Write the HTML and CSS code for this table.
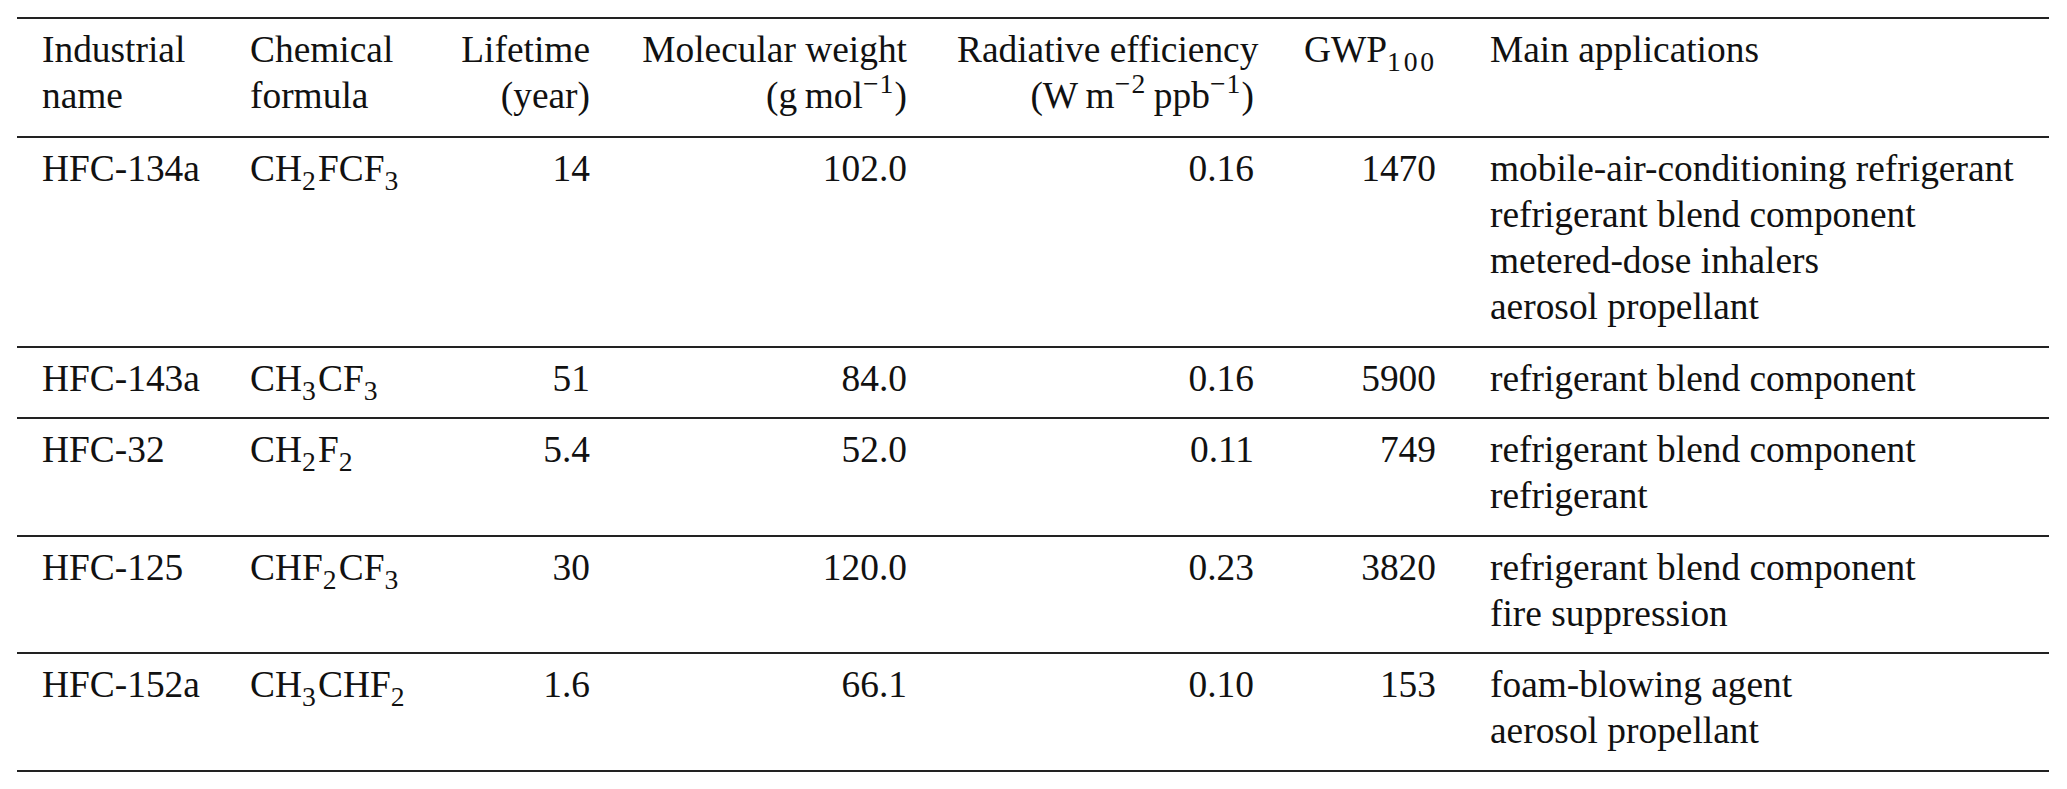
FILE: index.html
```html
<!DOCTYPE html>
<html lang="en">
<head>
<meta charset="utf-8">
<title>HFC table</title>
<link rel="stylesheet" href="styles.css">
</head>
<body>
<table class="hfc">
  <colgroup>
    <col class="c1"><col class="c2"><col class="c3"><col class="c4"><col class="c5"><col class="c6"><col class="c7">
  </colgroup>
  <thead>
    <tr>
      <th class="l">Industrial<br>name</th>
      <th class="l">Chemical<br>formula</th>
      <th class="r">Lifetime<br>(year)</th>
      <th class="r">Molecular weight<br>(g&thinsp;mol<sup>−1</sup>)</th>
      <th class="r">Radiative efficiency<br>(W&thinsp;m<sup>−2</sup>&thinsp;ppb<sup>−1</sup>)</th>
      <th class="r">GWP<sub>100</sub></th>
      <th class="l app">Main applications</th>
    </tr>
  </thead>
  <tbody>
    <tr>
      <td class="l">HFC-134a</td>
      <td class="l">CH<sub>2</sub>FCF<sub>3</sub></td>
      <td class="r">14</td>
      <td class="r">102.0</td>
      <td class="r">0.16</td>
      <td class="r">1470</td>
      <td class="l app">mobile-air-conditioning refrigerant<br>refrigerant blend component<br>metered-dose inhalers<br>aerosol propellant</td>
    </tr>
    <tr>
      <td class="l">HFC-143a</td>
      <td class="l">CH<sub>3</sub>CF<sub>3</sub></td>
      <td class="r">51</td>
      <td class="r">84.0</td>
      <td class="r">0.16</td>
      <td class="r">5900</td>
      <td class="l app">refrigerant blend component</td>
    </tr>
    <tr>
      <td class="l">HFC-32</td>
      <td class="l">CH<sub>2</sub>F<sub>2</sub></td>
      <td class="r">5.4</td>
      <td class="r">52.0</td>
      <td class="r">0.11</td>
      <td class="r">749</td>
      <td class="l app">refrigerant blend component<br>refrigerant</td>
    </tr>
    <tr>
      <td class="l">HFC-125</td>
      <td class="l">CHF<sub>2</sub>CF<sub>3</sub></td>
      <td class="r">30</td>
      <td class="r">120.0</td>
      <td class="r">0.23</td>
      <td class="r">3820</td>
      <td class="l app">refrigerant blend component<br>fire suppression</td>
    </tr>
    <tr>
      <td class="l">HFC-152a</td>
      <td class="l">CH<sub>3</sub>CHF<sub>2</sub></td>
      <td class="r">1.6</td>
      <td class="r">66.1</td>
      <td class="r">0.10</td>
      <td class="r">153</td>
      <td class="l app">foam-blowing agent<br>aerosol propellant</td>
    </tr>
  </tbody>
</table>
</body>
</html>
```
FILE: styles.css
```css
html, body {
  margin: 0;
  padding: 0;
  background: #ffffff;
}

body {
  padding: 17px 0 0 17px;
  font-family: "Liberation Serif", "Times New Roman", serif;
  font-size: 37.4px;
  line-height: 46px;
  color: #111111;
}

.hfc {
  border-collapse: collapse;
  table-layout: fixed;
  width: 2032px;
}

.c1 { width: 208px; }
.c2 { width: 211px; }
.c3 { width: 179px; }
.c4 { width: 317px; }
.c5 { width: 347px; }
.c6 { width: 182px; }
.c7 { width: 588px; }

.hfc th,
.hfc td {
  font-weight: normal;
  vertical-align: top;
  padding: 8px 25px 15.5px 25px;
  white-space: nowrap;
}

.hfc thead th {
  padding-bottom: 17px;
}

.hfc thead tr {
  border-top: 2px solid #222222;
}

.hfc tbody tr {
  border-top: 2px solid #222222;
}

.hfc tbody tr:last-child {
  border-bottom: 2px solid #222222;
}

.l { text-align: left; }
.r { text-align: right; }

.hfc .app {
  padding-left: 29px;
}

sub, sup {
  font-size: 0.74em;
  line-height: 0;
  position: relative;
  vertical-align: baseline;
}

sub {
  top: 0.33em;
  letter-spacing: 0.1em;
  margin-right: -0.02em;
}

sup {
  top: -0.55em;
  letter-spacing: 0.04em;
}
```
